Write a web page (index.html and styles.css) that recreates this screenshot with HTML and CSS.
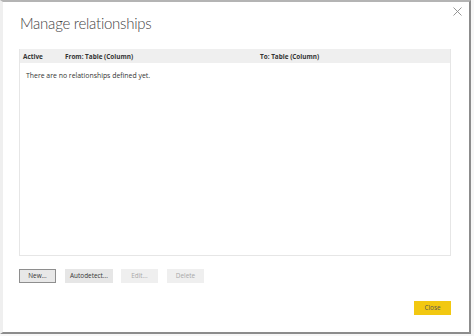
FILE: index.html
```html
<!DOCTYPE html>
<html>
<head>
<meta charset="utf-8">
<link rel="stylesheet" href="styles.css">
</head>
<body>
<div class="dialog">
  <div class="titlebar">
    <h1 class="title">Manage relationships</h1>
    <svg class="close-x" width="9" height="9" viewBox="0 0 9 9"><path d="M0.5 0.5 L8.5 8.5 M8.5 0.5 L0.5 8.5" stroke="#8a8a8a" stroke-width="0.9" fill="none"/></svg>
  </div>
  <div class="table">
    <div class="thead">
      <div class="th col-active">Active</div>
      <div class="th col-from">From: Table (Column)</div>
      <div class="th col-to">To: Table (Column)</div>
    </div>
    <div class="tbody">
      <div class="empty">There are no relationships defined yet.</div>
    </div>
  </div>
  <div class="actions">
    <button class="btn btn-focus w37">New...</button>
    <button class="btn w48 gap9">Autodetect...</button>
    <button class="btn btn-disabled w37 gap8">Edit...</button>
    <button class="btn btn-disabled w37 gap9">Delete</button>
  </div>
  <div class="footer">
    <button class="btn btn-primary">Close</button>
  </div>
</div>
</body>
</html>
```
FILE: styles.css
```css
html, body {
  margin: 0;
  padding: 0;
}
body {
  width: 474px;
  height: 336px;
  background: #f7f7f7;
  font-family: "Open Sans", "Noto Sans", sans-serif;
  overflow: hidden;
}
.dialog {
  box-sizing: border-box;
  width: 471px;
  height: 334px;
  background: #ffffff;
  border-top: 2px solid #b4b4b4;
  border-left: 3px solid #efefef;
  border-right: 2px solid #8c8c8c;
  border-bottom: 2px solid #8c8c8c;
  padding: 0 18px 0 16px;
  display: flex;
  flex-direction: column;
}
.titlebar {
  display: flex;
  justify-content: space-between;
  align-items: flex-start;
  height: 47px;
}
.title {
  margin: 11px 0 0 1px;
  font-family: Lato, "Open Sans", sans-serif;
  font-size: 15px;
  font-weight: 300;
  letter-spacing: -0.25px;
  color: #444;
  line-height: 20px;
}
.close-x {
  margin: 5px -11px 0 0;
}
.table {
  box-sizing: border-box;
  width: 432px;
  height: 207px;
  border: 1px solid #e6e6e6;
  border-top: none;
  display: flex;
  flex-direction: column;
}
.thead {
  display: flex;
  height: 14px;
  background: #efefef;
  align-items: center;
  font-size: 6.4px;
  font-weight: 700;
  color: #333;
}
.th {
  box-sizing: border-box;
  padding-left: 3px;
}
.col-active { width: 42px; }
.col-from { width: 195px; }
.col-to { flex: 1; }
.tbody {
  flex: 1;
}
.empty {
  margin: 8px 0 0 6px;
  font-size: 6.9px;
  color: #333;
}
.actions {
  display: flex;
  margin-top: 13px;
}
.gap9 { margin-left: 9px; }
.gap8 { margin-left: 8px; }
.btn {
  box-sizing: border-box;
  height: 14px;
  padding: 0;
  border: 1px solid #e6e6e6;
  background: #e6e6e6;
  font-family: "Open Sans", "Noto Sans", sans-serif;
  font-size: 6.4px;
  color: #333;
  line-height: 12px;
}
.w37 { width: 37px; }
.w48 { width: 48px; }
.btn-focus {
  border-color: #8e8e8e;
  background: #e8e8e8;
}
.btn-disabled {
  background: #efefef;
  border-color: #efefef;
  color: #a8a8a8;
}
.footer {
  display: flex;
  justify-content: flex-end;
  margin-top: 18px;
}
.btn-primary {
  width: 37px;
  background: #f2c811;
  border-color: #f2c811;
  color: #555;
}
```
